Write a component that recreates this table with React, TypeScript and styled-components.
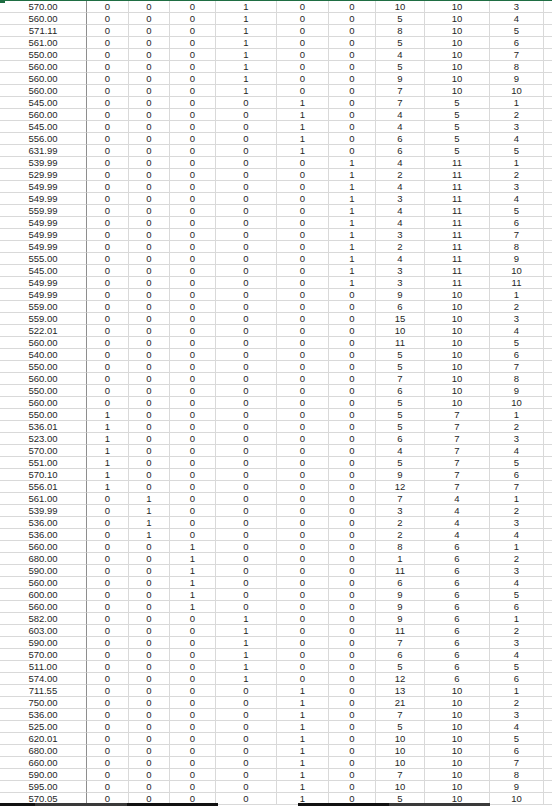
import styled, { createGlobalStyle } from 'styled-components'

const GlobalStyle = createGlobalStyle`
  html, body {
    margin: 0;
    padding: 0;
    background: #ffffff;
  }
  body {
    overflow: hidden;
    font-family: 'Liberation Sans', Arial, sans-serif;
  }
`

// price, which dummy column (0..5) is set, -1 for none, then three counts
type RowData = [string, number, number, number, number]

const rows: RowData[] = [
  ['570.00', 3, 10, 10, 3],
  ['560.00', 3, 5, 10, 4],
  ['571.11', 3, 8, 10, 5],
  ['561.00', 3, 5, 10, 6],
  ['550.00', 3, 4, 10, 7],
  ['560.00', 3, 5, 10, 8],
  ['560.00', 3, 9, 10, 9],
  ['560.00', 3, 7, 10, 10],
  ['545.00', 4, 7, 5, 1],
  ['560.00', 4, 4, 5, 2],
  ['545.00', 4, 4, 5, 3],
  ['556.00', 4, 6, 5, 4],
  ['631.99', 4, 6, 5, 5],
  ['539.99', 5, 4, 11, 1],
  ['529.99', 5, 2, 11, 2],
  ['549.99', 5, 4, 11, 3],
  ['549.99', 5, 3, 11, 4],
  ['559.99', 5, 4, 11, 5],
  ['549.99', 5, 4, 11, 6],
  ['549.99', 5, 3, 11, 7],
  ['549.99', 5, 2, 11, 8],
  ['555.00', 5, 4, 11, 9],
  ['545.00', 5, 3, 11, 10],
  ['549.99', 5, 3, 11, 11],
  ['549.99', -1, 9, 10, 1],
  ['559.00', -1, 6, 10, 2],
  ['559.00', -1, 15, 10, 3],
  ['522.01', -1, 10, 10, 4],
  ['560.00', -1, 11, 10, 5],
  ['540.00', -1, 5, 10, 6],
  ['550.00', -1, 5, 10, 7],
  ['560.00', -1, 7, 10, 8],
  ['550.00', -1, 6, 10, 9],
  ['560.00', -1, 5, 10, 10],
  ['550.00', 0, 5, 7, 1],
  ['536.01', 0, 5, 7, 2],
  ['523.00', 0, 6, 7, 3],
  ['570.00', 0, 4, 7, 4],
  ['551.00', 0, 5, 7, 5],
  ['570.10', 0, 9, 7, 6],
  ['556.01', 0, 12, 7, 7],
  ['561.00', 1, 7, 4, 1],
  ['539.99', 1, 3, 4, 2],
  ['536.00', 1, 2, 4, 3],
  ['536.00', 1, 2, 4, 4],
  ['560.00', 2, 8, 6, 1],
  ['680.00', 2, 1, 6, 2],
  ['590.00', 2, 11, 6, 3],
  ['560.00', 2, 6, 6, 4],
  ['600.00', 2, 9, 6, 5],
  ['560.00', 2, 9, 6, 6],
  ['582.00', 3, 9, 6, 1],
  ['603.00', 3, 11, 6, 2],
  ['590.00', 3, 7, 6, 3],
  ['570.00', 3, 6, 6, 4],
  ['511.00', 3, 5, 6, 5],
  ['574.00', 3, 12, 6, 6],
  ['711.55', 4, 13, 10, 1],
  ['750.00', 4, 21, 10, 2],
  ['536.00', 4, 7, 10, 3],
  ['525.00', 4, 5, 10, 4],
  ['620.01', 4, 10, 10, 5],
  ['680.00', 4, 10, 10, 6],
  ['660.00', 4, 10, 10, 7],
  ['590.00', 4, 7, 10, 8],
  ['595.00', 4, 10, 10, 9],
  ['570.05', 4, 5, 10, 10],
]

const Page = styled.div`
  position: relative;
  width: 552px;
  height: 806px;
  overflow: hidden;
`

const Sheet = styled.div`
  display: grid;
  grid-template-columns: 87px 42px 41px 46px 61px 52px 47px 49px 65px 54px 1fr;
  grid-auto-rows: 12px;
  border-top: 1px solid #1f6e43;
`

const Cell = styled.div<{ $divider?: boolean }>`
  box-sizing: border-box;
  height: 12px;
  border-bottom: 1px solid #d9d9d9;
  border-right: 1px solid ${(p) => (p.$divider ? '#8e8e8e' : '#d9d9d9')};
  font-size: 9.5px;
  line-height: 11px;
  color: #262626;
  text-align: center;
  white-space: nowrap;
  overflow: hidden;
`

const Filler = styled(Cell)`
  border-right: none;
`

const Handle = styled.div`
  position: absolute;
  left: 0;
  top: 0;
  width: 5px;
  height: 3px;
  background: #1f6e43;
`

const Dock = styled.div`
  position: absolute;
  left: 0;
  bottom: 0;
  height: 3px;
  width: 490px;
  display: flex;
`

const DockPart = styled.div<{ $w: number; $tone?: 'dark' | 'mid' | 'none' }>`
  width: ${(p) => p.$w}px;
  height: 100%;
  background: ${(p) =>
    p.$tone === 'mid' ? '#3a3a3a' : p.$tone === 'none' ? 'transparent' : '#111111'};
`

export default function App() {
  return (
    <Page>
      <GlobalStyle />
      <Sheet>
        {rows.map(([price, hot, a, b, c], i) => (
          <div key={i} style={{ display: 'contents' }}>
            <Cell $divider>{price}</Cell>
            {[0, 1, 2, 3, 4, 5].map((k) => (
              <Cell key={k}>{hot === k ? 1 : 0}</Cell>
            ))}
            <Cell>{a}</Cell>
            <Cell>{b}</Cell>
            <Cell>{c}</Cell>
            <Filler />
          </div>
        ))}
      </Sheet>
      <Handle />
      <Dock>
        <DockPart $w={35} />
        <DockPart $w={92} $tone="mid" />
        <DockPart $w={91} />
        <DockPart $w={80} $tone="none" />
        <DockPart $w={91} />
        <DockPart $w={101} $tone="mid" />
      </Dock>
    </Page>
  )
}
